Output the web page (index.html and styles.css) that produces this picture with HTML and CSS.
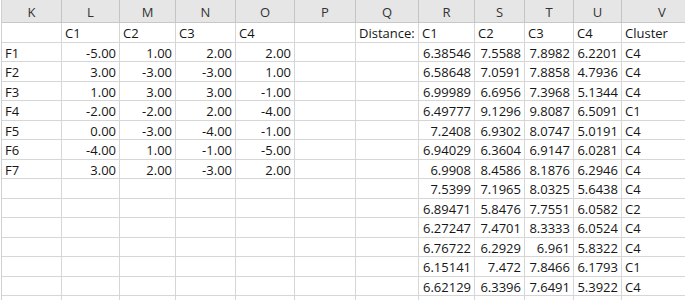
FILE: index.html
```html
<!DOCTYPE html>
<html>
<head>
<meta charset="utf-8">
<link rel="stylesheet" href="styles.css">
</head>
<body>
<div class="sheet">
  <div class="hd">K</div><div class="hd">L</div><div class="hd">M</div><div class="hd">N</div><div class="hd">O</div><div class="hd">P</div><div class="hd">Q</div><div class="hd">R</div><div class="hd">S</div><div class="hd">T</div><div class="hd">U</div><div class="hd last">V</div>

  <div class="c"></div><div class="c">C1</div><div class="c">C2</div><div class="c">C3</div><div class="c">C4</div><div class="c"></div><div class="c">Distance:</div><div class="c">C1</div><div class="c">C2</div><div class="c">C3</div><div class="c">C4</div><div class="c last">Cluster</div>

  <div class="c">F1</div><div class="c n">-5.00</div><div class="c n">1.00</div><div class="c n">2.00</div><div class="c n">2.00</div><div class="c"></div><div class="c"></div><div class="c n">6.38546</div><div class="c n">7.5588</div><div class="c n">7.8982</div><div class="c n">6.2201</div><div class="c last">C4</div>

  <div class="c">F2</div><div class="c n">3.00</div><div class="c n">-3.00</div><div class="c n">-3.00</div><div class="c n">1.00</div><div class="c"></div><div class="c"></div><div class="c n">6.58648</div><div class="c n">7.0591</div><div class="c n">7.8858</div><div class="c n">4.7936</div><div class="c last">C4</div>

  <div class="c">F3</div><div class="c n">1.00</div><div class="c n">3.00</div><div class="c n">3.00</div><div class="c n">-1.00</div><div class="c"></div><div class="c"></div><div class="c n">6.99989</div><div class="c n">6.6956</div><div class="c n">7.3968</div><div class="c n">5.1344</div><div class="c last">C4</div>

  <div class="c">F4</div><div class="c n">-2.00</div><div class="c n">-2.00</div><div class="c n">2.00</div><div class="c n">-4.00</div><div class="c"></div><div class="c"></div><div class="c n">6.49777</div><div class="c n">9.1296</div><div class="c n">9.8087</div><div class="c n">6.5091</div><div class="c last">C1</div>

  <div class="c">F5</div><div class="c n">0.00</div><div class="c n">-3.00</div><div class="c n">-4.00</div><div class="c n">-1.00</div><div class="c"></div><div class="c"></div><div class="c n">7.2408</div><div class="c n">6.9302</div><div class="c n">8.0747</div><div class="c n">5.0191</div><div class="c last">C4</div>

  <div class="c">F6</div><div class="c n">-4.00</div><div class="c n">1.00</div><div class="c n">-1.00</div><div class="c n">-5.00</div><div class="c"></div><div class="c"></div><div class="c n">6.94029</div><div class="c n">6.3604</div><div class="c n">6.9147</div><div class="c n">6.0281</div><div class="c last">C4</div>

  <div class="c">F7</div><div class="c n">3.00</div><div class="c n">2.00</div><div class="c n">-3.00</div><div class="c n">2.00</div><div class="c"></div><div class="c"></div><div class="c n">6.9908</div><div class="c n">8.4586</div><div class="c n">8.1876</div><div class="c n">6.2946</div><div class="c last">C4</div>

  <div class="c"></div><div class="c"></div><div class="c"></div><div class="c"></div><div class="c"></div><div class="c"></div><div class="c"></div><div class="c n">7.5399</div><div class="c n">7.1965</div><div class="c n">8.0325</div><div class="c n">5.6438</div><div class="c last">C4</div>

  <div class="c"></div><div class="c"></div><div class="c"></div><div class="c"></div><div class="c"></div><div class="c"></div><div class="c"></div><div class="c n">6.89471</div><div class="c n">5.8476</div><div class="c n">7.7551</div><div class="c n">6.0582</div><div class="c last">C2</div>

  <div class="c"></div><div class="c"></div><div class="c"></div><div class="c"></div><div class="c"></div><div class="c"></div><div class="c"></div><div class="c n">6.27247</div><div class="c n">7.4701</div><div class="c n">8.3333</div><div class="c n">6.0524</div><div class="c last">C4</div>

  <div class="c"></div><div class="c"></div><div class="c"></div><div class="c"></div><div class="c"></div><div class="c"></div><div class="c"></div><div class="c n">6.76722</div><div class="c n">6.2929</div><div class="c n">6.961</div><div class="c n">5.8322</div><div class="c last">C4</div>

  <div class="c"></div><div class="c"></div><div class="c"></div><div class="c"></div><div class="c"></div><div class="c"></div><div class="c"></div><div class="c n">6.15141</div><div class="c n">7.472</div><div class="c n">7.8466</div><div class="c n">6.1793</div><div class="c last">C1</div>

  <div class="c"></div><div class="c"></div><div class="c"></div><div class="c"></div><div class="c"></div><div class="c"></div><div class="c"></div><div class="c n">6.62129</div><div class="c n">6.3396</div><div class="c n">7.6491</div><div class="c n">5.3922</div><div class="c last">C4</div>

  <div class="c stub"></div><div class="c stub"></div><div class="c stub"></div><div class="c stub"></div><div class="c stub"></div><div class="c stub"></div><div class="c stub"></div><div class="c stub"></div><div class="c stub"></div><div class="c stub"></div><div class="c stub"></div><div class="c stub last"></div>
</div>
</body>
</html>
```
FILE: styles.css
```css
html, body {
  margin: 0;
  padding: 0;
  background: #ffffff;
  overflow: hidden;
}

body {
  width: 685px;
  height: 300px;
  font-family: "Open Sans", "Liberation Sans", sans-serif;
  font-size: 13px;
  font-weight: 500;
  color: #161616;
}

.sheet {
  display: grid;
  grid-template-columns: 60px 58px 56px 60px 59px 61px 63px 56px 50px 49px 48px 80px;
  grid-template-rows: 23px repeat(14, 19.5px) 4px;
  height: 300px;
  overflow: hidden;
  margin-left: 1px;
  border-left: 1px solid #d0d0d0;
}

.hd {
  box-sizing: border-box;
  background: #e6e6e6;
  border-right: 1px solid #c4c4c4;
  border-bottom: 1px solid #c8c8c8;
  text-align: center;
  line-height: 22px;
  padding-top: 1px;
  color: #333333;
  font-weight: 400;
}

.c {
  box-sizing: border-box;
  border-right: 1px solid #d6d6d6;
  border-bottom: 1px solid #d6d6d6;
  line-height: 17px;
  padding: 2px 3px 0 3px;
  white-space: nowrap;
  overflow: visible;
}

.stub {
  border-bottom: none;
}

.n {
  text-align: right;
}

.last {
  border-right: none;
}
```
